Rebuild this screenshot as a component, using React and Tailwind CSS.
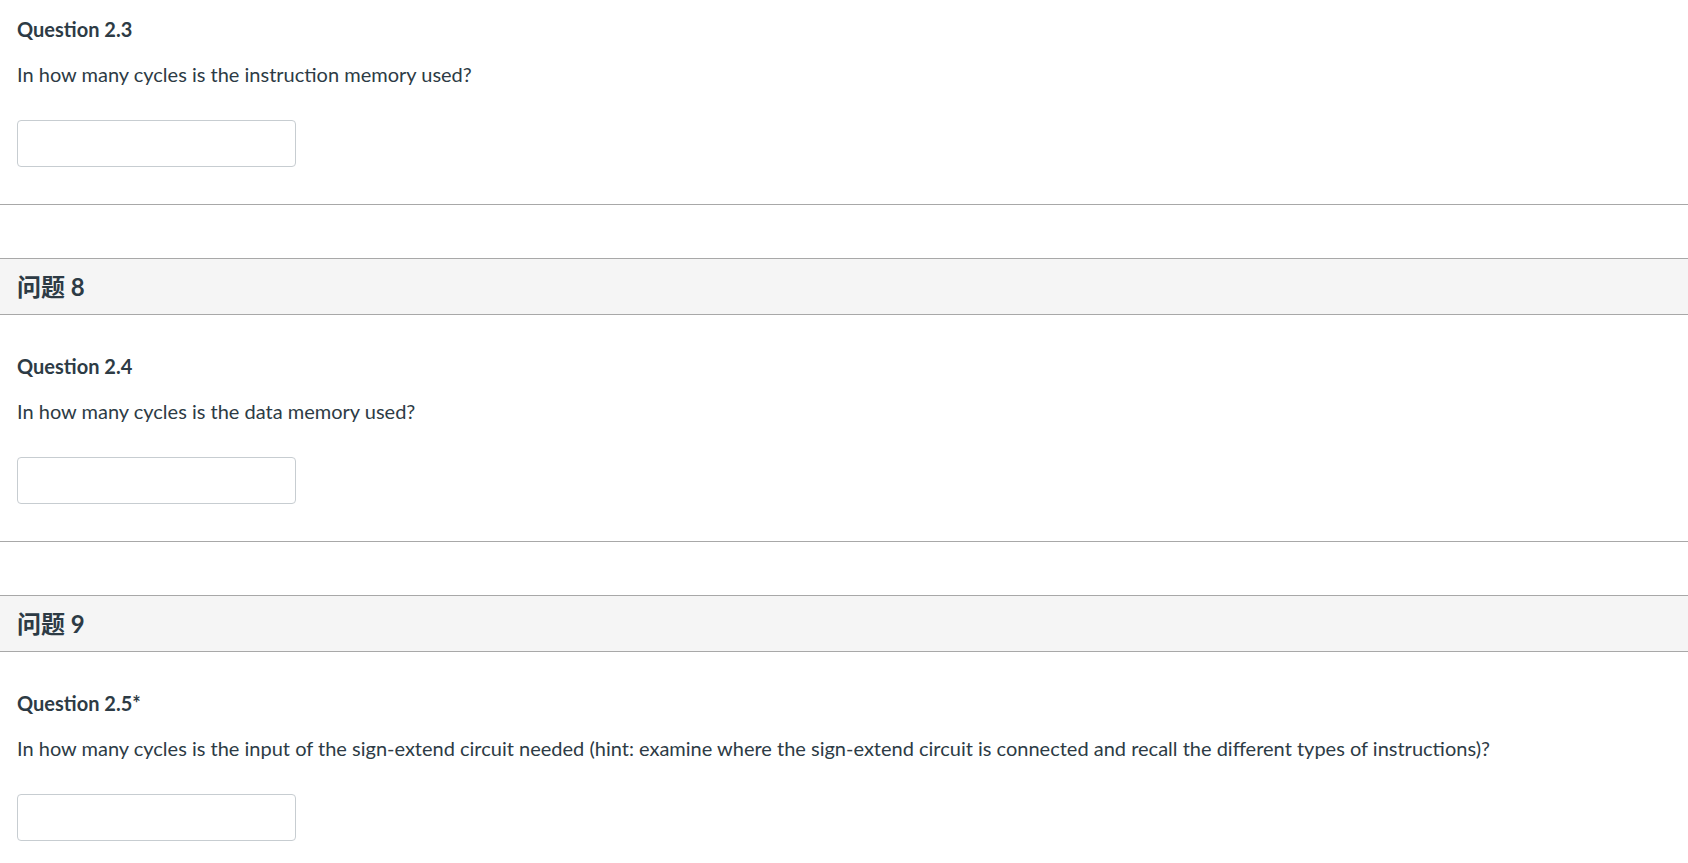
const questions = [
  {
    header: null,
    title: 'Question 2.3',
    text: 'In how many cycles is the instruction memory used?',
  },
  {
    header: '问题 8',
    title: 'Question 2.4',
    text: 'In how many cycles is the data memory used?',
  },
  {
    header: '问题 9',
    title: 'Question 2.5*',
    text: 'In how many cycles is the input of the sign-extend circuit needed (hint: examine where the sign-extend circuit is connected and recall the different types of instructions)?',
  },
];

function QuestionBody({ q, first }) {
  return (
    <div className={`px-[17px] ${first ? 'pt-[17px]' : 'pt-[39px]'}`}>
      <h3 className="text-[20px] font-bold leading-[24px] text-[#2d3b45]">{q.title}</h3>
      <p className="mt-[21px] text-[20px] leading-[24px] text-[#2d3b45]">{q.text}</p>
      <input
        type="text"
        className="mt-[34px] block h-[47px] w-[279px] rounded-[4px] border border-[#c7cdd1] bg-white px-3 outline-none"
      />
    </div>
  );
}

export default function App() {
  return (
    <div className="min-h-screen bg-white font-['Lato','Noto_Sans_CJK_SC',sans-serif] text-[#2d3b45]">
      {questions.map((q, i) => (
        <section key={i}>
          {q.header && (
            <div className="mt-[53px] flex h-[57px] items-center border-y border-[#a8a8a8] bg-[#f5f5f5] px-[17px]">
              <h2 className="text-[24px] font-bold text-[#2d3b45]">{q.header}</h2>
            </div>
          )}
          <QuestionBody q={q} first={i === 0} />
          {i < questions.length - 1 && <div className="mt-[37px] border-b border-[#a8a8a8]" />}
        </section>
      ))}
    </div>
  );
}
